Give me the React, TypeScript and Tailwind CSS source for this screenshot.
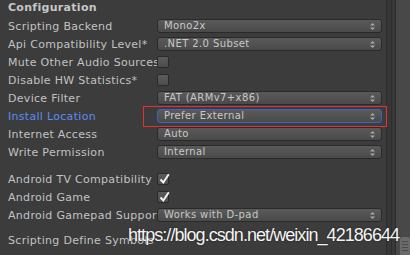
import React from "react";

type Row =
  | { label: string; kind: "popup"; value: string; active?: boolean }
  | { label: string; kind: "check"; checked: boolean };

const topRows: Row[] = [
  { label: "Scripting Backend", kind: "popup", value: "Mono2x" },
  { label: "Api Compatibility Level*", kind: "popup", value: ".NET 2.0 Subset" },
  { label: "Mute Other Audio Sources", kind: "check", checked: false },
  { label: "Disable HW Statistics*", kind: "check", checked: false },
  { label: "Device Filter", kind: "popup", value: "FAT (ARMv7+x86)" },
  { label: "Install Location", kind: "popup", value: "Prefer External", active: true },
  { label: "Internet Access", kind: "popup", value: "Auto" },
  { label: "Write Permission", kind: "popup", value: "Internal" },
];

const androidRows: Row[] = [
  { label: "Android TV Compatibility", kind: "check", checked: true },
  { label: "Android Game", kind: "check", checked: true },
  { label: "Android Gamepad Support Level", kind: "popup", value: "Works with D-pad" },
];

function Popup({ value, active }: { value: string; active?: boolean }) {
  return (
    <div
      className={`relative flex h-[14px] w-[225px] items-center rounded-[3px] border bg-gradient-to-b from-[#5a5a5a] to-[#4a4a4a] pl-[6px] ${
        active ? "border-[#3a62c8]" : "border-[#2a2a2a]"
      }`}
    >
      <span className="text-[10px] leading-none tracking-[0.4px] text-[#c8c8c8]">{value}</span>
      <svg className="absolute right-[6px] top-[3px]" width="5" height="7" viewBox="0 0 5 7">
        <path d="M2.5 0 L5 2.6 L0 2.6 Z" fill="#a8a8a8" />
        <path d="M2.5 7 L5 4.4 L0 4.4 Z" fill="#a8a8a8" />
      </svg>
    </div>
  );
}

function Check({ checked }: { checked: boolean }) {
  return (
    <div className="relative h-[12px] w-[12px] rounded-[2px] border border-[#2a2a2a] bg-gradient-to-b from-[#5c5c5c] to-[#4c4c4c]">
      {checked && (
        <svg className="absolute left-[1px] top-[-1px]" width="11" height="12" viewBox="0 0 11 12">
          <path d="M1.5 6.5 L4.3 9.5 L9.8 1.2" fill="none" stroke="#f2f2f2" strokeWidth="2" />
        </svg>
      )}
    </div>
  );
}

function FieldRow({ row }: { row: Row }) {
  const blue = row.kind === "popup" && row.active;
  return (
    <div className="flex h-[18px] items-center">
      <div
        className={`w-[149px] shrink-0 overflow-hidden whitespace-nowrap text-[11px] leading-none tracking-[0.3px] ${
          blue ? "text-[#5a8cf5]" : "text-[#c2c2c2]"
        }`}
      >
        {row.label}
      </div>
      {row.kind === "popup" ? <Popup value={row.value} active={row.active} /> : <Check checked={row.checked} />}
    </div>
  );
}

export default function App() {
  return (
    <div
      className="relative flex h-[255px] w-[410px] overflow-hidden bg-[#3c3c3c]"
      style={{ fontFamily: '"DejaVu Sans", Verdana, sans-serif' }}
    >
      <div className="w-[386px] shrink-0 pl-[8px]">
        <div className="h-[17px] pt-[2px] text-[11px] font-bold leading-none tracking-[0.3px] text-[#c6c6c6]">
          Configuration
        </div>
        {topRows.map((r) => (
          <FieldRow key={r.label} row={r} />
        ))}
        <div className="h-[9px]" />
        {androidRows.map((r) => (
          <FieldRow key={r.label} row={r} />
        ))}
        <div className="mt-[11px] h-[16px] text-[11px] leading-none tracking-[0.3px] text-[#c2c2c2]">
          Scripting Define Symbols
        </div>
        <div className="ml-[-2px] mt-[7px] h-[20px] w-[378px] rounded-[2px] border border-[#2a2a2a] bg-[#3a3a3a]" />
      </div>

      <div className="flex shrink-0">
        <div className="w-px bg-[#2c2c2c]" />
        <div className="w-[4px] bg-[#373737]" />
        <div className="w-px bg-[#2e2e2e]" />
        <div className="w-[3px] bg-[#393939]" />
        <div className="w-px bg-[#2b2b2b]" />
        <div className="flex w-[14px] flex-col justify-end bg-[#484848]">
          <div className="ml-[4px] flex h-[18px] flex-col items-center gap-[2px] rounded-t-[2px] bg-[#6a6a6a] pt-[4px]">
            <div className="h-px w-[6px] bg-[#4a4a4a]" />
            <div className="h-px w-[6px] bg-[#4a4a4a]" />
            <div className="h-px w-[6px] bg-[#4a4a4a]" />
            <div className="h-px w-[6px] bg-[#4a4a4a]" />
          </div>
        </div>
      </div>

      <div className="absolute left-[143px] top-[106px] h-[21px] w-[244px] border-[1.5px] border-[#e8302e]" />

      <div
        className="absolute left-[128px] top-[226px] whitespace-nowrap text-[18px] leading-none tracking-[-0.95px] text-[#f4f4f4]"
        style={{ fontFamily: '"Liberation Sans", Arial, sans-serif', textShadow: "0 0 2px rgba(0,0,0,0.6)" }}
      >
        https://blog.csdn.net/weixin_42186644
      </div>
    </div>
  );
}
